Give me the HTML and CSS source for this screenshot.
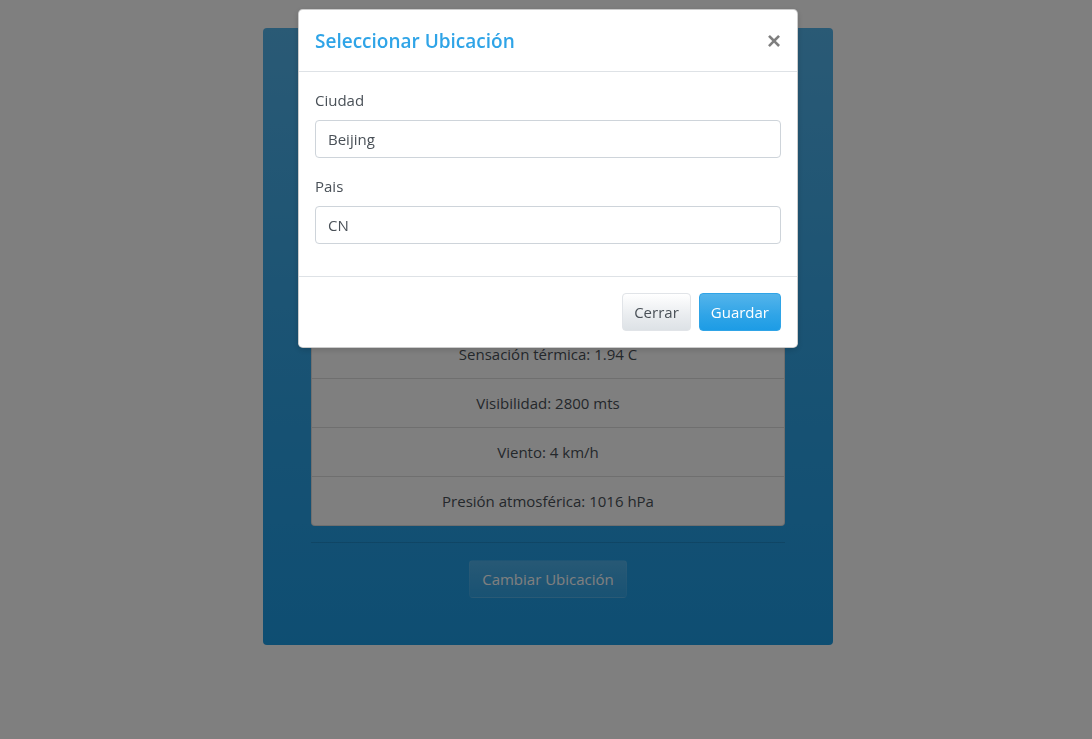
FILE: index.html
```html
<!DOCTYPE html>
<html lang="es">
<head>
<meta charset="utf-8">
<title>Clima</title>
<link rel="stylesheet" href="styles.css">
</head>
<body>
<div class="page">
  <div class="weather-card">
    <h1 class="city">Beijing, CN</h1>
    <p class="desc">Niebla</p>
    <ul class="list-group">
      <li class="list-item">Temperatura: 4.5 C</li>
      <li class="list-item">Humedad: 80 %</li>
      <li class="list-item">Sensación térmica: 1.94 C</li>
      <li class="list-item">Visibilidad: 2800 mts</li>
      <li class="list-item">Viento: 4 km/h</li>
      <li class="list-item">Presión atmosférica: 1016 hPa</li>
    </ul>
    <hr class="divider">
    <div class="actions">
      <button class="btn-change" type="button">Cambiar Ubicación</button>
    </div>
  </div>
</div>

<div class="backdrop"></div>
<div class="modal">
  <div class="modal-dialog">
    <div class="modal-header">
      <h5 class="modal-title">Seleccionar Ubicación</h5>
      <button class="close" type="button" aria-label="Close">×</button>
    </div>
    <div class="modal-body">
      <div class="form-group">
        <label class="label">Ciudad</label>
        <input class="input" type="text" value="Beijing">
      </div>
      <div class="form-group">
        <label class="label">Pais</label>
        <input class="input" type="text" value="CN">
      </div>
    </div>
    <div class="modal-footer">
      <button class="btn btn-secondary" type="button">Cerrar</button>
      <button class="btn btn-primary" type="button">Guardar</button>
    </div>
  </div>
</div>
</body>
</html>
```

FILE: styles.css
```css
* { box-sizing: border-box; }

html, body {
  margin: 0;
  height: 100%;
}

body {
  font-family: "Segoe UI", "Open Sans", "Noto Sans", sans-serif;
  font-size: 15px;
  line-height: 24px;
  color: #495057;
  background: #fff;
  overflow: hidden;
}

.page {
  padding: 28px 0 0 4px;
  display: flex;
  justify-content: center;
}

.weather-card {
  width: 570px;
  height: 617px;
  padding: 48px;
  border-radius: 4px;
  background-image: linear-gradient(#54b4eb, #2fa4e7 60%, #1d9ce5);
  color: #fff;
  display: flex;
  flex-direction: column;
}

.city {
  margin: 0;
  font-size: 38px;
  font-weight: 500;
  line-height: 1.2;
  text-align: center;
}

.desc {
  margin: 8px 0 77px;
  text-align: center;
  font-size: 19px;
}

.list-group {
  list-style: none;
  margin: 0;
  padding: 0;
  background: #fff;
  border-radius: 4px;
  border: 1px solid rgba(0, 0, 0, .125);
}

.list-item {
  padding: 12px 20px;
  text-align: center;
  color: #495057;
  border-top: 1px solid rgba(0, 0, 0, .125);
  line-height: 24px;
}

.list-item:first-child { border-top: 0; }

.divider {
  margin: 16px 0 17px;
  border: 0;
  border-top: 1px solid rgba(0, 0, 0, .12);
}

.actions {
  display: flex;
  justify-content: center;
}

.btn-change {
  font: inherit;
  color: #fff;
  padding: 6px 12px;
  line-height: 24px;
  border-radius: 4px;
  border: 1px solid rgba(255, 255, 255, .05);
  background-image: linear-gradient(rgba(255,255,255,.2), rgba(255,255,255,.08));
  background-color: transparent;
}

.backdrop {
  position: fixed;
  inset: 0;
  background: #000;
  opacity: .5;
}

.modal {
  position: fixed;
  inset: 0;
  padding: 9px 0 0 4px;
  display: flex;
  justify-content: center;
  align-items: flex-start;
}

.modal-dialog {
  width: 500px;
  background: #fff;
  border: 1px solid rgba(0, 0, 0, .2);
  border-radius: 4.8px;
  box-shadow: 0 2px 6px rgba(0,0,0,.15);
}

.modal-header {
  display: flex;
  align-items: flex-start;
  justify-content: space-between;
  padding: 16px 16px 15px;
  border-bottom: 1px solid #dee2e6;
}

.modal-title {
  margin: 0;
  font-size: 19px;
  font-weight: 600;
  line-height: 30px;
  color: #2fa4e7;
}

.close {
  font-family: "Liberation Sans", Arial, sans-serif;
  font-size: 24px;
  font-weight: 700;
  line-height: 1;
  color: #000;
  opacity: .5;
  background: transparent;
  border: 0;
  padding: 19px 16px 13px;
  margin: -16px -16px -16px auto;
}

.modal-body {
  padding: 16px;
}

.form-group { margin-bottom: 16px; }

.label {
  display: block;
  margin-bottom: 8px;
  line-height: 24px;
}

.input {
  display: block;
  width: 100%;
  height: 38px;
  padding: 6px 12px;
  font: inherit;
  color: #495057;
  background: #fff;
  border: 1px solid #ced4da;
  border-radius: 4px;
}

.modal-footer {
  display: flex;
  justify-content: flex-end;
  gap: 8px;
  padding: 16px;
  border-top: 1px solid #dee2e6;
}

.btn {
  font: inherit;
  line-height: 24px;
  padding: 6px 11px;
  border-radius: 4px;
  border: 1px solid transparent;
}

.btn-secondary {
  color: #495057;
  background-image: linear-gradient(#fff, #e9ecef 60%, #dde2e6);
  border-color: #e1e4e8;
}

.btn-primary {
  color: #fff;
  background-image: linear-gradient(#54b4eb, #2fa4e7 60%, #1d9ce5);
  border-color: #2fa4e7;
}
```
